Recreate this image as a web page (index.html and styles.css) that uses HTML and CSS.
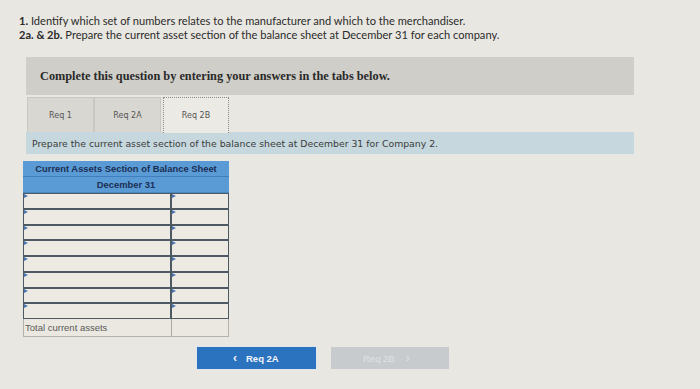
FILE: index.html
```html
<!DOCTYPE html>
<html>
<head>
<meta charset="utf-8">
<link rel="stylesheet" href="styles.css">
</head>
<body>
<div class="intro">
  <p><b>1.</b> Identify which set of numbers relates to the manufacturer and which to the merchandiser.</p>
  <p><b>2a. &amp; 2b.</b> Prepare the current asset section of the balance sheet at December 31 for each company.</p>
</div>
<div class="panel">
  <div class="notice">Complete this question by entering your answers in the tabs below.</div>
  <div class="tabs">
    <div class="tab">Req 1</div>
    <div class="tab">Req 2A</div>
    <div class="tab active">Req 2B</div>
  </div>
  <div class="prompt">Prepare the current asset section of the balance sheet at December 31 for Company 2.</div>
</div>
<div class="sheet">
  <div class="head">Current Assets Section of Balance Sheet</div>
  <div class="head sub">December 31</div>
  <div class="rows">
    <div class="cell"></div><div class="cell"></div>
    <div class="cell"></div><div class="cell"></div>
    <div class="cell"></div><div class="cell"></div>
    <div class="cell"></div><div class="cell"></div>
    <div class="cell"></div><div class="cell"></div>
    <div class="cell"></div><div class="cell"></div>
    <div class="cell"></div><div class="cell"></div>
    <div class="cell"></div><div class="cell"></div>
  </div>
  <div class="total">
    <div class="tlabel">Total current assets</div>
    <div class="tval"></div>
  </div>
</div>
<div class="nav">
  <div class="btn prev"><span class="chev">&lsaquo;</span> Req 2A</div>
  <div class="btn next">Req 2B <span class="chev">&rsaquo;</span></div>
</div>
</body>
</html>
```
FILE: styles.css
```css
html, body {
  margin: 0;
  padding: 0;
  background: #e9e7e1;
  width: 700px;
  height: 389px;
  overflow: hidden;
}
.intro {
  padding: 14px 0 0 19px;
  font-family: Lato, "Liberation Sans", sans-serif;
  font-size: 11.1px;
  line-height: 14px;
  color: #2b2b2b;
}
.intro p { margin: 0; }
.intro b { font-weight: 700; }
.panel {
  margin: 15px 0 0 26px;
  width: 608px;
}
.notice {
  height: 38px;
  background: #cfcec8;
  font-family: "Liberation Serif", serif;
  font-weight: bold;
  font-size: 12.3px;
  color: #2a2a2a;
  padding-left: 14px;
  display: flex;
  align-items: center;
}
.tabs {
  display: flex;
  margin-top: 2px;
  padding-left: 1px;
  height: 35px;
}
.tab {
  box-sizing: border-box;
  width: 67px;
  height: 35px;
  background: #d9d7d1;
  border: 1px solid #c9c7c1;
  border-bottom: none;
  font-family: "DejaVu Sans", Verdana, sans-serif;
  font-size: 8px;
  color: #555;
  display: flex;
  align-items: center;
  justify-content: center;
}
.tab.active {
  background: #eceae5;
  border: 1px dotted #8a8a8a;
  border-bottom: none;
  margin-left: 2px;
  height: 36px;
  width: 66px;
}
.prompt {
  height: 22px;
  background: #c6d8de;
  font-family: "DejaVu Sans", Verdana, sans-serif;
  font-size: 9.3px;
  color: #3a3a3a;
  padding-left: 6px;
  display: flex;
  align-items: center;
}
.sheet {
  margin: 7px 0 0 23px;
  width: 206px;
}
.head {
  background: #5a9bd6;
  height: 15px;
  font-family: "Liberation Sans", Arial, sans-serif;
  font-weight: bold;
  font-size: 9.4px;
  color: #1b2f52;
  display: flex;
  align-items: center;
  justify-content: center;
  border-bottom: 1px solid #3f7fbf;
}
.head.sub {
  height: 15px;
  border-bottom: 1px solid #4a88c4;
}
.rows {
  display: grid;
  grid-template-columns: 147px 59px;
  grid-auto-rows: 15.75px;
  background: #4d5963;
}
.cell {
  position: relative;
  background: #edeae3;
  border-top: 1px solid #4d5963;
  border-bottom: 1px solid #4d5963;
  border-left: 1px solid #4d5963;
  box-sizing: border-box;
}
.cell:nth-child(2n) {
  border-left: 2px solid #4d5963;
  border-right: 1px solid #4d5963;
}
.cell::before {
  content: "";
  position: absolute;
  left: 0;
  top: 0;
  border-left: 4px solid #4b74b3;
  border-top: 2px solid transparent;
  border-bottom: 2px solid transparent;
}
.total {
  display: grid;
  grid-template-columns: 147px 59px;
  height: 18px;
  border: 1px solid #b4b2ad;
  border-top: none;
  box-sizing: border-box;
  background: #ebe8e1;
}
.tlabel {
  font-family: "Liberation Sans", Arial, sans-serif;
  font-size: 9.5px;
  color: #5a5a5a;
  padding-left: 1px;
  display: flex;
  align-items: center;
}
.tval {
  border-left: 1px solid #a9a7a2;
}
.nav {
  display: flex;
  margin: 10px 0 0 197px;
  gap: 15px;
}
.btn {
  box-sizing: border-box;
  height: 22px;
  width: 119px;
  display: flex;
  align-items: center;
  justify-content: center;
  font-family: "Liberation Sans", Arial, sans-serif;
  font-weight: bold;
  font-size: 9.5px;
}
.prev {
  background: #2b73be;
  color: #f4f6fa;
  outline: 1px solid #dfe6ee;
  justify-content: flex-start;
  padding-left: 36px;
}
.prev .chev { margin-right: 9px; font-size: 12px; line-height: 1; }
.next {
  background: #c8cbcd;
  color: #dfe2e5;
  width: 118px;
  justify-content: flex-start;
  padding-left: 32px;
  font-weight: normal;
}
.next .chev { margin-left: 11px; font-size: 12px; line-height: 1; }
```
